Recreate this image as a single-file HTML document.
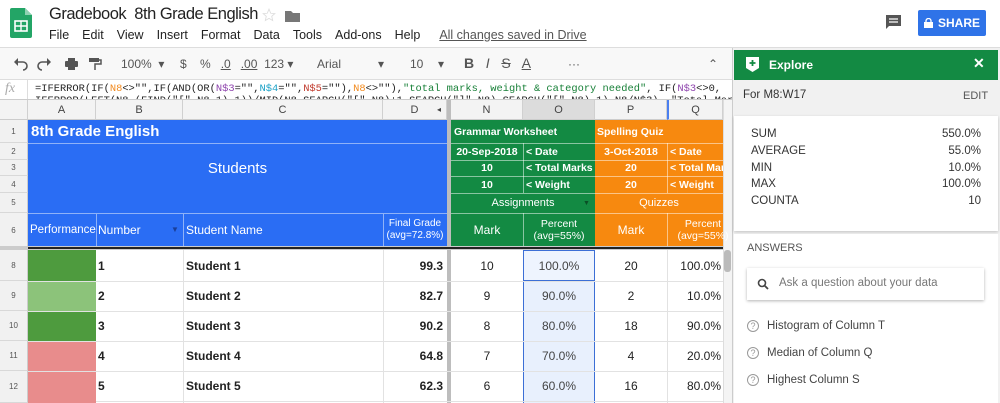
<!DOCTYPE html>
<html><head><meta charset="utf-8"><style>
*{box-sizing:border-box;margin:0;padding:0}
body{width:1000px;height:403px;overflow:hidden;background:#fff;font-family:"Liberation Sans",Arial,sans-serif;position:relative;color:#222}
.a{position:absolute}
.c{position:absolute;display:flex;align-items:center;font-size:12px;overflow:hidden;white-space:nowrap}
.blue{background:#2a6df4;color:#fff}
.grn{background:#138a43;color:#fff}
.org{background:#f7890f;color:#fff}
.rn{position:absolute;left:0;width:28px;background:#f1f1f1;border-bottom:1px solid #d8d8d8;border-right:1px solid #ccc;font-size:8px;color:#555;display:flex;align-items:center;justify-content:center}
.ch{position:absolute;top:100px;height:20px;background:#f3f3f3;border-right:1px solid #d0d0d0;border-bottom:1px solid #ccc;font-size:11px;color:#444;display:flex;align-items:center;justify-content:center}
.menu span{margin-right:13px}
.tb{position:absolute;top:57px;font-size:12px;color:#555}
.q{display:inline-block;width:12px;height:12px;border:1px solid #999;border-radius:50%;font-size:9px;color:#999;text-align:center;line-height:11px;vertical-align:middle;margin-right:8px}
</style></head><body>
<!-- header -->
<svg class="a" style="left:10px;top:8px" width="22" height="30" viewBox="0 0 22 30"><path d="M0 2a2 2 0 0 1 2-2h13l7 7v21a2 2 0 0 1-2 2H2a2 2 0 0 1-2-2z" fill="#23a566"/><path d="M15 0v7h7z" fill="#8ed1b1"/><rect x="5" y="13" width="12" height="10" fill="none" stroke="#fff" stroke-width="1.6"/><path d="M5 18h12M11 13v10" stroke="#fff" stroke-width="1.4"/></svg>
<div class="a" style="left:49px;top:5px;font-size:16.5px;letter-spacing:-0.5px;color:#222">Gradebook&nbsp; 8th Grade English</div>
<svg class="a" style="left:262px;top:8px" width="14" height="14" viewBox="0 0 24 24"><path d="M12 2l3 7 7 .6-5.3 4.7 1.6 7.2L12 17.8 5.7 21.5l1.6-7.2L2 9.6 9 9z" fill="none" stroke="#ddd" stroke-width="1.5"/></svg>
<svg class="a" style="left:285px;top:10px" width="15" height="12"><path d="M0 1h6l2 2h7v9H0z" fill="#777"/></svg>
<div class="a menu" style="left:49px;top:28px;font-size:12.5px;color:#222"><span>File</span><span>Edit</span><span>View</span><span>Insert</span><span>Format</span><span>Data</span><span>Tools</span><span>Add-ons</span><span>Help</span><span style="color:#555;text-decoration:underline;margin-left:6px">All changes saved in Drive</span></div>
<svg class="a" style="left:885px;top:14px" width="17" height="17"><path d="M1 1h15v11H4l-3 3z" fill="#555"/><path d="M4 5h9M4 8h9" stroke="#fff" stroke-width="1.3"/></svg>
<div class="a" style="left:918px;top:10px;width:68px;height:26px;background:#2f73e8;border-radius:2px;color:#fff;font-size:12px;font-weight:bold;display:flex;align-items:center;justify-content:center"><svg width="9" height="10" style="margin-right:5px"><rect x="0" y="4" width="9" height="6" fill="#fff"/><path d="M2 4V3a2.5 2.5 0 0 1 5 0v1" fill="none" stroke="#fff" stroke-width="1.3"/></svg>SHARE</div>
<div class="a" style="left:0;top:47px;width:1000px;height:1px;background:#ddd"></div>
<!-- toolbar -->
<div class="a" style="left:0;top:48px;width:732px;height:32px;background:#f8f8f8;border-bottom:1px solid #ddd"></div>
<svg class="a" style="left:13px;top:57px" width="100" height="14" viewBox="0 0 100 14">
<path d="M3 5h7a4 4 0 0 1 0 8" fill="none" stroke="#555" stroke-width="1.6"/><path d="M1 5l4-4v8z" fill="#555"/>
<path d="M36 5h-7a4 4 0 0 0 0 8" fill="none" stroke="#555" stroke-width="1.6"/><path d="M38 5l-4-4v8z" fill="#555"/>
<rect x="52" y="4" width="13" height="6" rx="1" fill="#555"/><rect x="55" y="1" width="7" height="3" fill="#555"/><rect x="55" y="9" width="7" height="4" fill="#555"/>
<rect x="76" y="1" width="10" height="4" fill="#555"/><path d="M86 3h2v4h-6v6" fill="none" stroke="#555" stroke-width="1.5"/>
</svg>
<div class="tb" style="left:121px">100% &nbsp;▾</div>
<div class="tb" style="left:180px">$ &nbsp;&nbsp; % &nbsp;&nbsp;<u>.0</u>&nbsp;&nbsp; <u>.00</u>&nbsp; 123 ▾</div>
<div class="tb" style="left:317px">Arial</div><div class="tb" style="left:378px">▾</div>
<div class="tb" style="left:410px">10</div><div class="tb" style="left:438px">▾</div>
<div class="tb" style="left:464px;font-size:14px;top:55px"><b>B</b>&nbsp;&nbsp; <i>I</i>&nbsp;&nbsp; <s>S</s>&nbsp;&nbsp; <u>A</u></div>
<div class="tb" style="left:568px">···</div>
<div class="tb" style="left:708px">⌃</div>
<div class="a" style="left:0;top:80px;width:732px;height:20px;background:#fff;border-bottom:1px solid #ccc;overflow:hidden">
<div class="a" style="left:5px;top:1px;font-family:'Liberation Serif',serif;font-style:italic;color:#aaa;font-size:14px">fx</div>
<div class="a" style="left:27px;top:0;width:1px;height:20px;background:#ddd"></div>
<div class="a" style="left:35px;top:3px;font-family:'Liberation Mono',monospace;font-size:10.4px;white-space:nowrap;line-height:12px;color:#222">=IFERROR(IF(<span style="color:#f28b20">N8</span>&lt;&gt;"",IF(AND(OR(<span style="color:#8e44ad">N$3</span>="",<span style="color:#1ba1c7">N$4</span>="",<span style="color:#c0392b">N$5</span>=""),<span style="color:#f28b20">N8</span>&lt;&gt;""),<span style="color:#188038">"total marks, weight &amp; category needed"</span>, IF(<span style="color:#8e44ad">N$3</span>&lt;&gt;0,<br>IFERROR(LEFT(N8,(FIND("[",N8,1)-1))/MID(N8,SEARCH("[",N8)+1,SEARCH("]",N8)-SEARCH("[",N8)-1),N8/N$3), "Total Marks</div></div>
<!-- column headers -->
<div class="ch" style="left:0;width:28px"></div>
<div class="ch" style="left:28px;width:68px">A</div>
<div class="ch" style="left:96px;width:87px">B</div>
<div class="ch" style="left:183px;width:200px">C</div>
<div class="ch" style="left:383px;width:64px">D<span style="position:absolute;right:5px;font-size:8px">◂</span></div>
<div class="a" style="left:447px;top:100px;width:4px;height:303px;background:#bdbdbd"></div>
<div class="ch" style="left:451px;width:72px">N</div>
<div class="ch" style="left:523px;width:72px;background:#dcdcdc">O</div>
<div class="ch" style="left:595px;width:72px">P</div>
<div class="ch" style="left:667px;width:56px;border-left:2px solid #4a7ff0">Q</div>
<div class="a" style="left:723px;top:100px;width:9px;height:303px;background:#f4f4f4;border-left:1px solid #ddd"></div>
<div class="a" style="left:724px;top:250px;width:7px;height:22px;background:#bbb;border-radius:3px"></div>
<!-- row numbers -->
<div class="rn" style="top:120px;height:23px">1</div>
<div class="rn" style="top:143px;height:17px">2</div>
<div class="rn" style="top:160px;height:16px">3</div>
<div class="rn" style="top:176px;height:17px">4</div>
<div class="rn" style="top:193px;height:20px">5</div>
<div class="rn" style="top:213px;height:35px">6</div>
<div class="a" style="left:0;top:246px;width:723px;height:4px;background:#ccc"></div>
<div class="a" style="left:28px;top:247px;width:695px;height:2px;background:#222"></div>
<div class="rn" style="top:250px;height:31px">8</div>
<div class="rn" style="top:281px;height:30px">9</div>
<div class="rn" style="top:311px;height:30px">10</div>
<div class="rn" style="top:341px;height:30px">11</div>
<div class="rn" style="top:371px;height:32px">12</div>
<!-- blue block -->
<div class="a blue" style="left:28px;top:120px;width:419px;height:126px"></div>
<div class="c" style="left:31px;top:120px;height:23px;color:#fff;font-weight:bold;font-size:15px">8th Grade English</div>
<div class="a" style="left:28px;top:143px;width:419px;height:1px;background:#8fb2f8"></div>
<div class="c" style="left:28px;top:143px;width:419px;height:50px;justify-content:center;color:#fff;font-size:15px">Students</div>
<div class="a" style="left:28px;top:213px;width:419px;height:1px;background:#8fb2f8"></div>
<div class="a" style="left:96px;top:213px;width:1px;height:33px;background:#8fb2f8"></div>
<div class="a" style="left:183px;top:213px;width:1px;height:33px;background:#8fb2f8"></div>
<div class="a" style="left:383px;top:213px;width:1px;height:33px;background:#8fb2f8"></div>
<div class="c" style="left:30px;top:213px;height:33px;color:#fff;font-size:11.5px">Performance</div>
<div class="c" style="left:98px;top:213px;height:33px;color:#fff">Number</div>
<div class="c" style="left:171px;top:213px;height:33px;color:#1a3f99;font-size:8px">▼</div>
<div class="c" style="left:186px;top:213px;height:33px;color:#fff">Student Name</div>
<div class="a" style="left:383px;top:218px;width:64px;color:#fff;font-size:10px;text-align:center;line-height:12px">Final Grade<br>(avg=72.8%)</div>
<!-- green block -->
<div class="a grn" style="left:451px;top:120px;width:144px;height:126px"></div>
<div class="a org" style="left:595px;top:120px;width:128px;height:126px"></div>
<div class="a" style="left:451px;top:143px;width:272px;height:1px;background:#fff;opacity:.5"></div>
<div class="a" style="left:451px;top:160px;width:272px;height:1px;background:#fff;opacity:.5"></div>
<div class="a" style="left:451px;top:176px;width:272px;height:1px;background:#fff;opacity:.5"></div>
<div class="a" style="left:451px;top:193px;width:272px;height:1px;background:#fff;opacity:.5"></div>
<div class="a" style="left:451px;top:213px;width:272px;height:1px;background:#fff;opacity:.5"></div>
<div class="a" style="left:523px;top:143px;width:1px;height:50px;background:#fff;opacity:.5"></div>
<div class="a" style="left:667px;top:143px;width:1px;height:50px;background:#fff;opacity:.5"></div>
<div class="a" style="left:523px;top:213px;width:1px;height:33px;background:#fff;opacity:.5"></div>
<div class="a" style="left:667px;top:213px;width:1px;height:33px;background:#fff;opacity:.5"></div>
<div class="c" style="left:454px;top:120px;height:23px;color:#fff;font-weight:bold;font-size:10.5px">Grammar Worksheet</div>
<div class="c" style="left:597px;top:120px;height:23px;color:#fff;font-weight:bold;font-size:10.5px">Spelling Quiz</div>
<div class="c" style="left:451px;top:143px;width:72px;height:17px;justify-content:center;color:#fff;font-weight:bold;font-size:10.5px">20-Sep-2018</div>
<div class="c" style="left:526px;top:143px;height:17px;color:#fff;font-weight:bold;font-size:10.5px">&lt; Date</div>
<div class="c" style="left:595px;top:143px;width:72px;height:17px;justify-content:center;color:#fff;font-weight:bold;font-size:10.5px">3-Oct-2018</div>
<div class="c" style="left:670px;top:143px;height:17px;color:#fff;font-weight:bold;font-size:10.5px">&lt; Date</div>
<div class="c" style="left:451px;top:160px;width:72px;height:16px;justify-content:center;color:#fff;font-weight:bold;font-size:10.5px">10</div>
<div class="c" style="left:526px;top:160px;height:16px;color:#fff;font-weight:bold;font-size:10.5px">&lt; Total Marks</div>
<div class="c" style="left:595px;top:160px;width:72px;height:16px;justify-content:center;color:#fff;font-weight:bold;font-size:10.5px">20</div>
<div class="c" style="left:670px;top:160px;width:53px;height:16px;color:#fff;font-weight:bold;font-size:10.5px">&lt; Total Marks</div>
<div class="c" style="left:451px;top:176px;width:72px;height:17px;justify-content:center;color:#fff;font-weight:bold;font-size:10.5px">10</div>
<div class="c" style="left:526px;top:176px;height:17px;color:#fff;font-weight:bold;font-size:10.5px">&lt; Weight</div>
<div class="c" style="left:595px;top:176px;width:72px;height:17px;justify-content:center;color:#fff;font-weight:bold;font-size:10.5px">20</div>
<div class="c" style="left:670px;top:176px;height:17px;color:#fff;font-weight:bold;font-size:10.5px">&lt; Weight</div>
<div class="c" style="left:451px;top:193px;width:144px;height:20px;justify-content:center;color:#fff;font-size:11px">Assignments</div>
<div class="c" style="left:583px;top:193px;height:20px;color:#0a4f26;font-size:7px">▼</div>
<div class="c" style="left:595px;top:193px;width:128px;height:20px;justify-content:center;color:#fff;font-size:11px">Quizzes</div>
<div class="c" style="left:451px;top:213px;width:72px;height:33px;justify-content:center;color:#fff">Mark</div>
<div class="a" style="left:523px;top:218px;width:72px;color:#fff;font-size:10.5px;text-align:center;line-height:12px">Percent<br>(avg=55%)</div>
<div class="c" style="left:595px;top:213px;width:72px;height:33px;justify-content:center;color:#fff">Mark</div>
<div class="a" style="left:667px;top:218px;width:72px;color:#fff;font-size:10.5px;text-align:center;line-height:12px">Percent<br>(avg=55%)</div>
<!-- data rows -->
<div class="a" style="left:523px;top:250px;width:72px;height:153px;background:#e8f0fd;border-left:1px solid #3c6fd6;border-right:1px solid #3c6fd6"></div>
<div class="a" style="left:523px;top:250px;width:72px;height:31px;border:1.5px solid #3c6fd6;background:#eef4fe"></div>
<!-- grid lines -->
<div class="a" style="left:28px;top:281px;width:695px;height:1px;background:#e2e2e2"></div>
<div class="a" style="left:28px;top:311px;width:695px;height:1px;background:#e2e2e2"></div>
<div class="a" style="left:28px;top:341px;width:695px;height:1px;background:#e2e2e2"></div>
<div class="a" style="left:28px;top:371px;width:695px;height:1px;background:#e2e2e2"></div>
<div class="a" style="left:28px;top:401px;width:695px;height:1px;background:#e2e2e2"></div>
<div class="a" style="left:183px;top:250px;width:1px;height:153px;background:#e2e2e2"></div>
<div class="a" style="left:383px;top:250px;width:1px;height:153px;background:#e2e2e2"></div>
<div class="a" style="left:667px;top:250px;width:1px;height:153px;background:#e2e2e2"></div>
<div class="a" style="left:28px;top:250px;width:68px;height:31px;background:#4e9b3e"></div>
<div class="a" style="left:28px;top:282px;width:68px;height:29px;background:#8cc37a"></div>
<div class="a" style="left:28px;top:312px;width:68px;height:29px;background:#4e9b3e"></div>
<div class="a" style="left:28px;top:342px;width:68px;height:29px;background:#e88c8c"></div>
<div class="a" style="left:28px;top:372px;width:68px;height:31px;background:#e88c8c"></div>
<div style="font-size:12px">
<div class="c" style="left:98px;top:250px;height:31px;font-weight:bold">1</div><div class="c" style="left:186px;top:250px;height:31px;font-weight:bold">Student 1</div><div class="c" style="left:383px;top:250px;width:60px;height:31px;justify-content:flex-end;font-weight:bold">99.3</div><div class="c" style="left:451px;top:250px;width:72px;height:31px;justify-content:center">10</div><div class="c" style="left:523px;top:250px;width:72px;height:31px;justify-content:center;color:#444">100.0%</div><div class="c" style="left:595px;top:250px;width:72px;height:31px;justify-content:center">20</div><div class="c" style="left:667px;top:250px;width:54px;height:31px;justify-content:flex-end">100.0%</div>
<div class="c" style="left:98px;top:281px;height:30px;font-weight:bold">2</div><div class="c" style="left:186px;top:281px;height:30px;font-weight:bold">Student 2</div><div class="c" style="left:383px;top:281px;width:60px;height:30px;justify-content:flex-end;font-weight:bold">82.7</div><div class="c" style="left:451px;top:281px;width:72px;height:30px;justify-content:center">9</div><div class="c" style="left:523px;top:281px;width:72px;height:30px;justify-content:center;color:#444">90.0%</div><div class="c" style="left:595px;top:281px;width:72px;height:30px;justify-content:center">2</div><div class="c" style="left:667px;top:281px;width:54px;height:30px;justify-content:flex-end">10.0%</div>
<div class="c" style="left:98px;top:311px;height:30px;font-weight:bold">3</div><div class="c" style="left:186px;top:311px;height:30px;font-weight:bold">Student 3</div><div class="c" style="left:383px;top:311px;width:60px;height:30px;justify-content:flex-end;font-weight:bold">90.2</div><div class="c" style="left:451px;top:311px;width:72px;height:30px;justify-content:center">8</div><div class="c" style="left:523px;top:311px;width:72px;height:30px;justify-content:center;color:#444">80.0%</div><div class="c" style="left:595px;top:311px;width:72px;height:30px;justify-content:center">18</div><div class="c" style="left:667px;top:311px;width:54px;height:30px;justify-content:flex-end">90.0%</div>
<div class="c" style="left:98px;top:341px;height:30px;font-weight:bold">4</div><div class="c" style="left:186px;top:341px;height:30px;font-weight:bold">Student 4</div><div class="c" style="left:383px;top:341px;width:60px;height:30px;justify-content:flex-end;font-weight:bold">64.8</div><div class="c" style="left:451px;top:341px;width:72px;height:30px;justify-content:center">7</div><div class="c" style="left:523px;top:341px;width:72px;height:30px;justify-content:center;color:#444">70.0%</div><div class="c" style="left:595px;top:341px;width:72px;height:30px;justify-content:center">4</div><div class="c" style="left:667px;top:341px;width:54px;height:30px;justify-content:flex-end">20.0%</div>
<div class="c" style="left:98px;top:371px;height:30px;font-weight:bold">5</div><div class="c" style="left:186px;top:371px;height:30px;font-weight:bold">Student 5</div><div class="c" style="left:383px;top:371px;width:60px;height:30px;justify-content:flex-end;font-weight:bold">62.3</div><div class="c" style="left:451px;top:371px;width:72px;height:30px;justify-content:center">6</div><div class="c" style="left:523px;top:371px;width:72px;height:30px;justify-content:center;color:#444">60.0%</div><div class="c" style="left:595px;top:371px;width:72px;height:30px;justify-content:center">16</div><div class="c" style="left:667px;top:371px;width:54px;height:30px;justify-content:flex-end">80.0%</div>
</div>
<!-- explore panel -->
<div class="a" style="left:732px;top:48px;width:268px;height:355px;background:#f1f1f1;border-left:1px solid #ccc"></div>
<div class="a" style="left:734px;top:50px;width:264px;height:30px;background:#138a43"></div>
<svg class="a" style="left:746px;top:57px" width="13" height="15"><path d="M0 0h13v11l-6.5 4L0 11z" fill="#fff"/><path d="M6.5 3v6M3.5 6h6" stroke="#138a43" stroke-width="1.8"/></svg>
<div class="a" style="left:769px;top:58px;color:#fff;font-size:12px;font-weight:bold">Explore</div>
<div class="a" style="left:973px;top:55px;color:#fff;font-size:14px;font-weight:bold">✕</div>
<div class="a" style="left:743px;top:89px;font-size:11.5px;color:#333">For M8:W17</div>
<div class="a" style="left:963px;top:90px;font-size:11px;color:#555">EDIT</div>
<div class="a" style="left:734px;top:116px;width:264px;height:115px;background:#fff;box-shadow:0 1px 3px rgba(0,0,0,.2)"></div>
<div class="a" style="left:751px;top:126px;font-size:11.5px;color:#333;line-height:16.8px">SUM<br>AVERAGE<br>MIN<br>MAX<br>COUNTA</div>
<div class="a" style="left:900px;width:81px;text-align:right;top:126px;font-size:11.5px;color:#333;line-height:16.8px">550.0%<br>55.0%<br>10.0%<br>100.0%<br>10</div>
<div class="a" style="left:734px;top:234px;width:264px;height:169px;background:#fff"></div>
<div class="a" style="left:747px;top:242px;font-size:11px;color:#555">ANSWERS</div>
<div class="a" style="left:747px;top:268px;width:237px;height:32px;background:#fff;box-shadow:0 1px 3px rgba(0,0,0,.3)"></div>
<svg class="a" style="left:757px;top:278px" width="12" height="12"><circle cx="5" cy="5" r="3.5" fill="none" stroke="#444" stroke-width="1.6"/><path d="M7.5 7.5l3.5 3.5" stroke="#444" stroke-width="1.8"/></svg>
<div class="a" style="left:779px;top:277px;font-size:11.5px;color:#777">Ask a question about your data</div>
<div class="a" style="left:747px;top:313px;font-size:11.5px;color:#444;line-height:27px"><span class="q">?</span>Histogram of Column T<br><span class="q">?</span>Median of Column Q<br><span class="q">?</span>Highest Column S</div>
</body></html>
